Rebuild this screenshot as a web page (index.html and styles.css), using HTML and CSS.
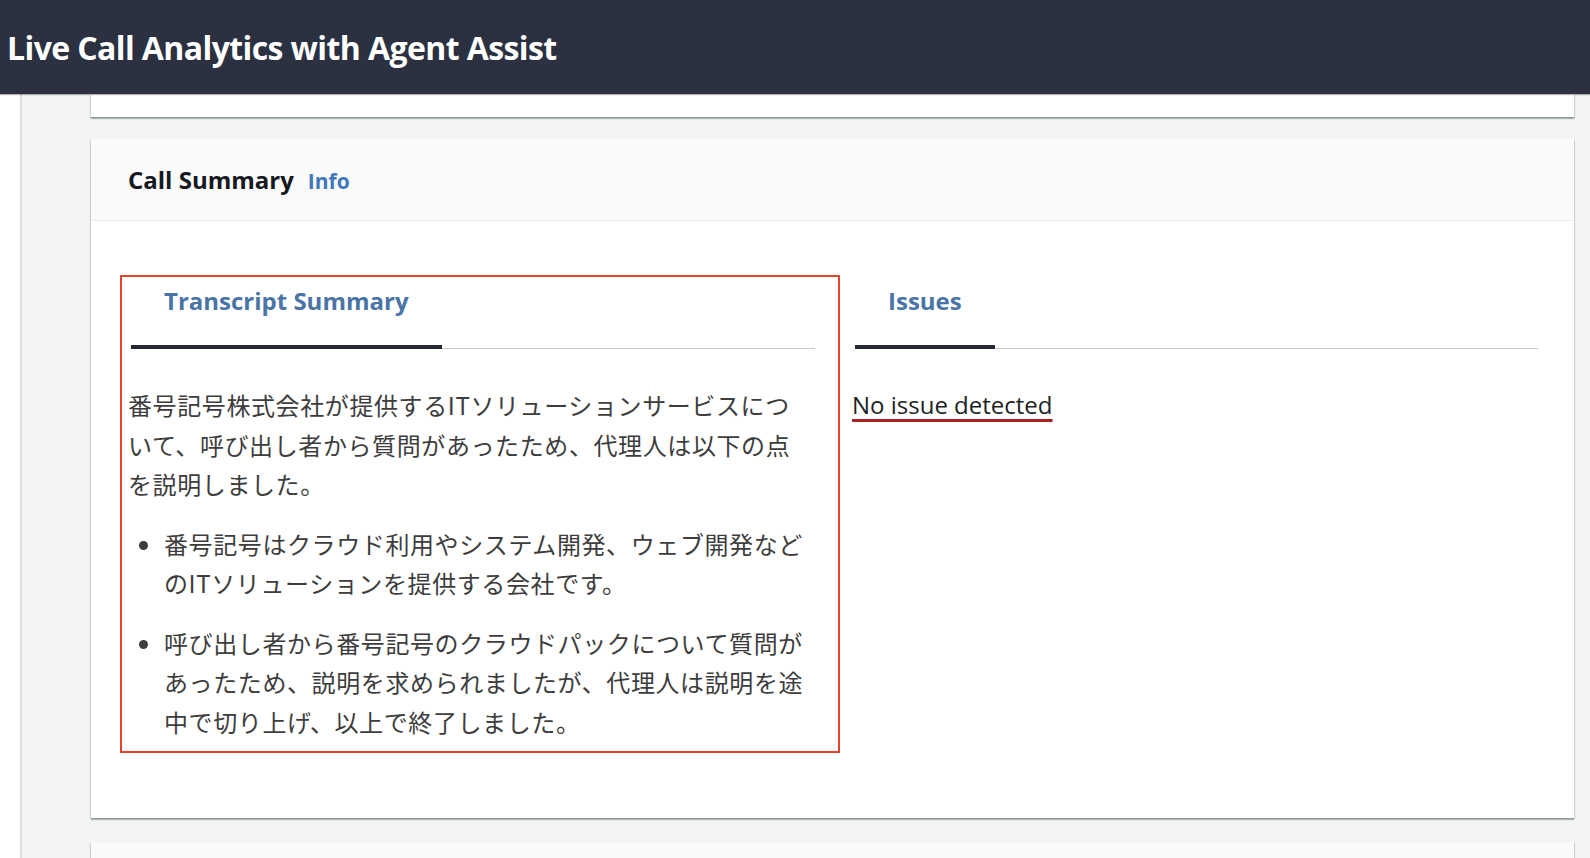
FILE: index.html
```html
<!DOCTYPE html>
<html lang="ja">
<head>
<meta charset="utf-8">
<title>Live Call Analytics with Agent Assist</title>
<link rel="stylesheet" href="styles.css">
</head>
<body>
<header class="topbar">
  <h1 class="app-title">Live Call Analytics with Agent Assist</h1>
</header>
<div class="layout">
  <aside class="side-strip"></aside>
  <main class="content">
    <div class="card card-prev"></div>
    <section class="card summary">
      <div class="card-header">
        <h2 class="card-title">Call Summary</h2>
        <a class="info-link">Info</a>
      </div>
      <div class="card-body">
        <div class="col col-highlight">
          <div class="tabs"><div class="tab active">Transcript Summary</div></div>
          <div class="tab-panel">
            <p class="summary-text">番号記号株式会社が提供するITソリューションサービスについて、呼び出し者から質問があったため、代理人は以下の点を説明しました。</p>
            <ul class="summary-list">
              <li>番号記号はクラウド利用やシステム開発、ウェブ開発などのITソリューションを提供する会社です。</li>
              <li>呼び出し者から番号記号のクラウドパックについて質問があったため、説明を求められましたが、代理人は説明を途中で切り上げ、以上で終了しました。</li>
            </ul>
          </div>
        </div>
        <div class="col">
          <div class="tabs"><div class="tab active">Issues</div></div>
          <div class="tab-panel">
            <p class="no-issue">No issue detected</p>
          </div>
        </div>
      </div>
    </section>
    <div class="card card-next"></div>
  </main>
</div>
</body>
</html>
```

FILE: styles.css
```css
html, body {
  margin: 0;
  height: 100%;
  overflow: hidden;
}
body {
  font-family: "Open Sans", "Noto Sans CJK JP", sans-serif;
  background: #f2f3f3;
}
.topbar {
  height: 94px;
  background: #2b3141;
  display: flex;
  align-items: center;
  padding-left: 7px;
  box-shadow: 0 1px 1px rgba(0, 0, 0, 0.3);
  position: relative;
  z-index: 2;
}
.app-title {
  margin: 0;
  color: #fff;
  font-size: 32px;
  font-weight: 700;
  letter-spacing: -0.6px;
}
.layout {
  display: flex;
  height: calc(100% - 94px);
}
.side-strip {
  width: 20px;
  background: #fff;
  border-right: 2px solid #dcdddd;
}
.content {
  flex: 1;
  padding: 0 16px 0 69px;
  display: flex;
  flex-direction: column;
}
.card {
  background: #fff;
  box-shadow: 0 2px 1px rgba(0, 28, 36, 0.25), 1px 1px 1px rgba(0, 28, 36, 0.12), -1px 1px 1px rgba(0, 28, 36, 0.12);
}
.card-prev {
  height: 23px;
  margin-bottom: 22px;
}
.card-header {
  height: 81px;
  background: #fafafa;
  border-bottom: 1px solid #eaeded;
  display: flex;
  align-items: center;
  padding-left: 37px;
  gap: 14px;
}
.card-title {
  margin: 0;
  font-size: 24px;
  font-weight: 700;
  color: #16191f;
}
.info-link {
  font-size: 21px;
  font-weight: 700;
  color: #3f77bb;
  padding-top: 2px;
}
.card-body {
  display: grid;
  grid-template-columns: 684px 683px;
  column-gap: 40px;
  padding: 56px 36px 77px 40px;
}
.col {
  min-width: 0;
}
.col-highlight {
  position: relative;
}
.col-highlight::after {
  content: "";
  position: absolute;
  left: -11px;
  right: -25px;
  top: -2px;
  bottom: -12px;
  border: 2px solid #e8432d;
  pointer-events: none;
}
.tabs {
  display: flex;
  border-bottom: 1px solid #c8c8c8;
}
.tab {
  padding: 9px 33px 29px;
  line-height: 30px;
  font-size: 24px;
  font-weight: 700;
  color: #4a74a6;
  margin-bottom: -1px;
  border-bottom: 4px solid transparent;
}
.tab.active {
  border-bottom-color: #232a33;
}
.tab-panel {
  margin-left: -3px;
}
.summary-text {
  margin: 36px 0 0;
  max-width: 675px;
  font-family: "Noto Sans CJK JP", sans-serif;
  font-size: 24px;
  line-height: 39.5px;
  letter-spacing: 0.6px;
  color: #3d3d3d;
}
.summary-list {
  margin: 20px 0 0;
  padding-left: 36px;
  font-family: "Noto Sans CJK JP", sans-serif;
  font-size: 24px;
  line-height: 39.5px;
  letter-spacing: 0.6px;
  color: #3d3d3d;
}
.summary-list li + li {
  margin-top: 20px;
}
.no-issue {
  margin: 36px 0 0;
  font-size: 24px;
  line-height: 39.5px;
  color: #1d1f24;
  text-decoration: underline 3px solid #a82323;
  text-underline-offset: 5px;
}
.card-next {
  margin-top: 24px;
  flex: 1;
  background: #fafafa;
}
```
